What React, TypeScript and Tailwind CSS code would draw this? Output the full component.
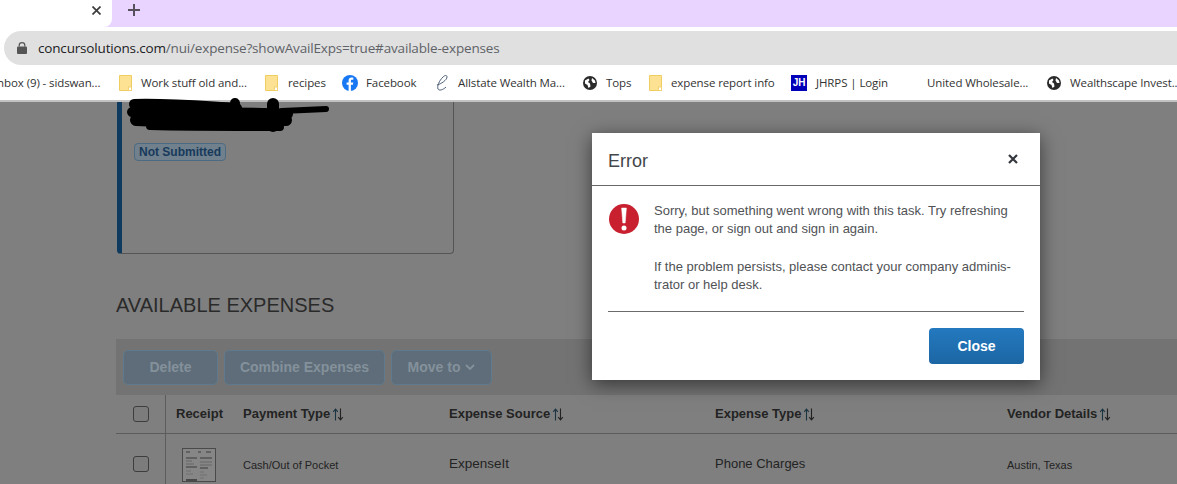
import React from "react";

const Folder = ({ ml }: { ml: string }) => (
  <svg className={`${ml} shrink-0`} width="13" height="16" viewBox="0 0 13 16">
    <path d="M0.5 0.5H12.5V15.5H0.5Z" fill="#fde293" stroke="#f0cd60" />
    <rect x="9.5" y="12" width="3" height="3.5" fill="#fff" stroke="#f0cd60" strokeWidth="0.8" />
  </svg>
);

const Globe = ({ ml }: { ml: string }) => (
  <svg className={`${ml} shrink-0`} width="14" height="14" viewBox="0 0 14 14">
    <circle cx="7" cy="7" r="7" fill="#2b2b2b" />
    <path d="M2 4.5 5.5 2.5 6.5 4 5 6 7 7.5 7.5 10.5 5.5 12 4.5 9 2 7.5Z M9 2 12 4.5 12.5 7 10 7 8.5 4.5Z" fill="#fff" />
  </svg>
);

const Sort = () => (
  <svg className="ml-[2px]" width="12" height="13" viewBox="0 0 12 13" fill="none" strokeWidth="1.1">
    <path d="M3.5 12.5V1.5M1.2 3.8 3.5 1.2 5.8 3.8" stroke="#1b3442" />
    <path d="M8.5 0.5V11.5M6.2 9.2 8.5 11.8 10.8 9.2" stroke="#222" />
  </svg>
);

const Box = () => <div className="w-4 h-4 rounded-[3px] border border-[#3d3d3d] bg-[#7c7c7c]" />;

const Mark = ({ children, w }: { children: React.ReactNode; w: string }) => (
  <span className={`${w} shrink-0`}>{children}</span>
);

export default function App() {
  return (
    <div className="relative w-[1177px] h-[484px] overflow-hidden bg-[#7f7f7f] font-['Liberation_Sans',sans-serif]">
      {/* tab strip */}
      <div className="flex h-[27px] bg-[#e9d3ff]">
        <div className="w-[112px] bg-white rounded-br-[8px] flex justify-end pr-[11px] pt-[6px]">
          <svg width="9" height="9" viewBox="0 0 9 9" stroke="#3c3c3c" strokeWidth="1.7"><path d="M0.5 0.5 8.5 8.5M8.5 0.5 0.5 8.5" /></svg>
        </div>
        <svg className="ml-[16px] mt-[4px]" width="12" height="12" viewBox="0 0 12 12" stroke="#55505c" strokeWidth="2"><path d="M6 0V12M0 6H12" /></svg>
      </div>
      {/* address bar */}
      <div className="h-[38px] bg-white pt-[4px] pl-[4px]">
        <div className="h-[34px] bg-[#e0e0e0] rounded-l-[17px] flex items-center pl-[13px]">
          <svg width="10" height="12" viewBox="0 0 10 12" fill="#555"><path d="M1.6 4.5V3.3a3.4 3.3 0 0 1 6.8 0v1.2h-1.2V3.3a2.2 2.1 0 0 0-4.4 0v1.2Z" /><rect y="4.5" width="10" height="7.5" rx="1" /></svg>
          <span className="ml-[11px] text-[13.5px] text-[#5f6368] font-['Open_Sans',sans-serif] tracking-[-0.17px]">
            <span className="text-[#202124]">concursolutions.com</span>/nui/expense?showAvailExps=true#available-expenses
          </span>
        </div>
      </div>
      {/* bookmarks */}
      <div className="h-[37px] bg-white border-b-2 border-[#c2c2c2] flex items-center text-[11.5px] tracking-[-0.1px] text-[#333] font-['Open_Sans',sans-serif] whitespace-nowrap overflow-hidden">
        <span className="ml-[-6px] w-[107px] shrink-0">Inbox (9) - sidswan...</span>
        <Folder ml="ml-[18px]" />
        <Mark w="ml-[9px] w-[108px]">Work stuff old and...</Mark>
        <Folder ml="ml-[16px]" />
        <Mark w="ml-[10px] w-[38px]">recipes</Mark>
        <svg className="ml-[16px] shrink-0" width="16" height="16" viewBox="0 0 16 16"><circle cx="8" cy="8" r="8" fill="#1877f2" /><path d="M8.9 16V9.8h2l.4-2.4H8.9V6c0-.8.3-1.2 1.2-1.2h1.2V2.7c-.5 0-1.1-.1-1.7-.1-1.9 0-3 1.1-3 3v1.8H4.6v2.4h2V16Z" fill="#fff" /></svg>
        <Mark w="ml-[8px] w-[52px]">Facebook</Mark>
        <svg className="ml-[17px] shrink-0" width="15" height="18" viewBox="0 0 15 18" fill="none" stroke="#4a5d75" strokeWidth="1"><path d="M2 11C6 10 12 6 12 3 12 1 10 1 8 3 4 7 2 12 3 15 4 17 8 16 11 13" /></svg>
        <Mark w="ml-[8px] w-[109px]">Allstate Wealth Ma...</Mark>
        <Globe ml="ml-[16px]" />
        <Mark w="ml-[9px] w-[26px]">Tops</Mark>
        <Folder ml="ml-[17px]" />
        <Mark w="ml-[9px] w-[104px]">expense report info</Mark>
        <span className="ml-[16px] w-4 h-4 shrink-0 bg-[#0000b8] text-white text-[10px] font-bold leading-4 text-center font-['Liberation_Sans',sans-serif]">JH</span>
        <Mark w="ml-[9px] w-[72px]">JHRPS | Login</Mark>
        <Mark w="ml-[39px] w-[104px]">United Wholesale...</Mark>
        <Globe ml="ml-[16px]" />
        <Mark w="ml-[9px] w-[110px]">Wealthscape Invest...</Mark>
      </div>

      {/* page */}
      <div className="pl-[116px]">
        <div className="relative ml-[1px] w-[337px] h-[152px] rounded-b-[4px] border-r border-b border-[#555] border-l-[5px] border-l-[#0d3a5e] pl-[12px] pt-[41px]">
          <svg className="absolute left-0 top-[-4px]" width="210" height="38" viewBox="0 0 210 38" fill="none" stroke="#000" strokeLinecap="round" strokeLinejoin="round">
            <path d="M12 6C50 5 80 8 115 10" strokeWidth="10" />
            <path d="M10 14C60 15 110 13 166 16" strokeWidth="10" />
            <path d="M14 22C60 24 110 20 164 22" strokeWidth="12" />
            <path d="M28 28C70 29 110 29 158 29" strokeWidth="8" />
            <path d="M113 5 112 14" strokeWidth="10" />
            <path d="M151 6 151 28" strokeWidth="12" />
            <path d="M160 13 204 11" strokeWidth="6" />
          </svg>
          <span className="block w-fit h-[18px] px-[4px] rounded-[4px] border border-[#4c6a82] bg-[#70808c] text-[#173a5c] text-[12px] font-bold leading-[16px]">Not Submitted</span>
        </div>
        <h2 className="mt-[39px] h-[24px] text-[20px] leading-[24px] font-normal text-[#2a2a2a]">AVAILABLE EXPENSES</h2>
        <div className="mt-[22px] h-[56px] bg-[#737373] flex items-center pl-[7px] gap-[6px] text-[14px] font-bold text-[#84919b]">
          <div className="w-[95px] h-[35px] rounded-[5px] border border-[#5f7a8e] bg-[#5e6d79] flex items-center justify-center">Delete</div>
          <div className="w-[161px] h-[35px] rounded-[5px] border border-[#5f7a8e] bg-[#5e6d79] flex items-center justify-center">Combine Expenses</div>
          <div className="w-[101px] h-[35px] rounded-[5px] border border-[#5f7a8e] bg-[#5e6d79] flex items-center justify-center gap-[5px]">
            Move to
            <svg width="10" height="7" viewBox="0 0 10 7" fill="none" stroke="#84919b" strokeWidth="1.8"><path d="M1 1 5 5 9 1" /></svg>
          </div>
        </div>
        <div className="grid grid-cols-[49px_78px_206px_266px_292px_170px] text-[#232323]">
          <div className="h-[39px] border-b border-[#5c5c5c] flex items-center justify-center"><Box /></div>
          <div className="h-[39px] border-b border-l border-[#5c5c5c] pl-[10px] flex items-center text-[13px] font-bold">Receipt</div>
          <div className="h-[39px] border-b border-[#5c5c5c] flex items-center text-[13px] font-bold">Payment Type<Sort /></div>
          <div className="h-[39px] border-b border-[#5c5c5c] flex items-center text-[13px] font-bold">Expense Source<Sort /></div>
          <div className="h-[39px] border-b border-[#5c5c5c] flex items-center text-[13px] font-bold">Expense Type<Sort /></div>
          <div className="h-[39px] border-b border-[#5c5c5c] flex items-center text-[13px] font-bold">Vendor Details<Sort /></div>

          <div className="h-[60px] pt-[22px] flex justify-center"><Box /></div>
          <div className="h-[60px] border-l border-[#5c5c5c] pl-[16px] pt-[14px]">
            <svg width="34" height="34" viewBox="0 0 34 34">
              <rect x="0.5" y="0.5" width="33" height="33" fill="#868686" stroke="#4a4a4a" />
              <path d="M4 4H8M16 4H19M24 4H29" stroke="#555" strokeWidth="1.5" />
              <path d="M4 10H15M18 10H30" stroke="#3a3a3a" />
              <path d="M4 13H10M4 16H12M18 14H30M18 17H30" stroke="#666" />
              <path d="M4 19H15M18 20H26" stroke="#3a3a3a" />
              <path d="M4 23H9M4 26H11M18 24H22M18 27H25M18 30H22" stroke="#707070" />
              <path d="M4 32H15" stroke="#222" strokeWidth="1.2" />
            </svg>
          </div>
          <div className="h-[60px] pt-[24px] text-[11px] leading-[14px]">Cash/Out of Pocket</div>
          <div className="h-[60px] pt-[22px] text-[13.5px] leading-[16px]">ExpenseIt</div>
          <div className="h-[60px] pt-[22px] text-[13px] leading-[16px]">Phone Charges</div>
          <div className="h-[60px] pt-[24px] text-[11px] leading-[14px]">Austin, Texas</div>
        </div>
      </div>

      {/* modal */}
      <div className="absolute left-[592px] top-[133px] w-[448px] h-[247px] bg-white shadow-[0_4px_18px_rgba(0,0,0,0.55)] text-[#505256]">
        <div className="h-[53px] border-b border-[#67686a] flex items-center justify-between pl-[16px] pr-[22px]">
          <span className="text-[18px] leading-[24px] text-[#43464a] mt-[4px]">Error</span>
          <svg width="10" height="10" viewBox="0 0 10 10" stroke="#33373d" strokeWidth="2.2"><path d="M1 1 9 9M9 1 1 9" /></svg>
        </div>
        <div className="flex pl-[17px] pr-[16px] pt-[16px] h-[125px] items-start">
          <svg className="shrink-0 mt-[2px]" width="30" height="30" viewBox="0 0 30 30">
            <circle cx="15" cy="15" r="15" fill="#c8202f" />
            <path d="M12.6 4h4.8l-1.2 15h-2.4Z" fill="#fff" stroke="#fff" strokeWidth="0.5" strokeLinejoin="round" />
            <circle cx="15" cy="24" r="2.5" fill="#fff" />
          </svg>
          <div className="ml-[15px] text-[13px] leading-[18px]">
            <p>Sorry, but something went wrong with this task. Try refreshing<br />the page, or sign out and sign in again.</p>
            <p className="mt-[20px]">If the problem persists, please contact your company adminis-<br />trator or help desk.</p>
          </div>
        </div>
        <div className="mx-[16px] border-t border-[#6b6b6d] flex justify-end pt-[16px]">
          <div className="w-[95px] h-[36px] rounded-[4px] bg-gradient-to-b from-[#2479bf] to-[#1c66a4] text-white text-[14px] font-bold flex items-center justify-center">Close</div>
        </div>
      </div>
    </div>
  );
}
